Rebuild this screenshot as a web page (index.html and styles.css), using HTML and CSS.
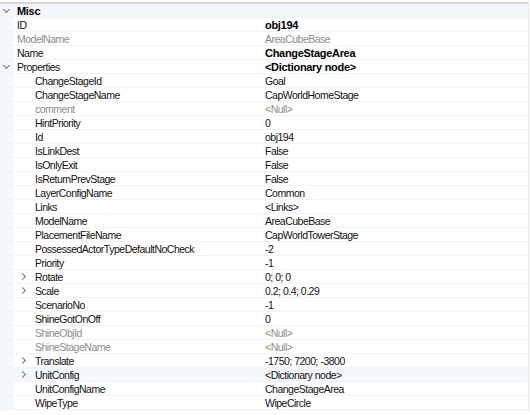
FILE: index.html
```html
<!DOCTYPE html>
<html>
<head>
<meta charset="utf-8">
<link rel="stylesheet" href="styles.css">
</head>
<body>
<div class="grid">
  <div class="row cat"><div class="m"><span class="chev down"></span></div><div class="n b">Misc</div><div class="v"></div></div>
  <div class="row"><div class="m"></div><div class="n">ID</div><div class="v b">obj194</div></div>
  <div class="row"><div class="m"></div><div class="n g">ModelName</div><div class="v g">AreaCubeBase</div></div>
  <div class="row"><div class="m"></div><div class="n">Name</div><div class="v b">ChangeStageArea</div></div>
  <div class="row"><div class="m"><span class="chev down"></span></div><div class="n">Properties</div><div class="v b">&lt;Dictionary node&gt;</div></div>
  <div class="row"><div class="m"></div><div class="n c">ChangeStageId</div><div class="v">Goal</div></div>
  <div class="row"><div class="m"></div><div class="n c">ChangeStageName</div><div class="v">CapWorldHomeStage</div></div>
  <div class="row"><div class="m"></div><div class="n c g">comment</div><div class="v g">&lt;Null&gt;</div></div>
  <div class="row"><div class="m"></div><div class="n c">HintPriority</div><div class="v">0</div></div>
  <div class="row"><div class="m"></div><div class="n c">Id</div><div class="v">obj194</div></div>
  <div class="row"><div class="m"></div><div class="n c">IsLinkDest</div><div class="v">False</div></div>
  <div class="row"><div class="m"></div><div class="n c">IsOnlyExit</div><div class="v">False</div></div>
  <div class="row"><div class="m"></div><div class="n c">IsReturnPrevStage</div><div class="v">False</div></div>
  <div class="row"><div class="m"></div><div class="n c">LayerConfigName</div><div class="v">Common</div></div>
  <div class="row"><div class="m"></div><div class="n c">Links</div><div class="v">&lt;Links&gt;</div></div>
  <div class="row"><div class="m"></div><div class="n c">ModelName</div><div class="v">AreaCubeBase</div></div>
  <div class="row"><div class="m"></div><div class="n c">PlacementFileName</div><div class="v">CapWorldTowerStage</div></div>
  <div class="row"><div class="m"></div><div class="n c">PossessedActorTypeDefaultNoCheck</div><div class="v">-2</div></div>
  <div class="row"><div class="m"></div><div class="n c">Priority</div><div class="v">-1</div></div>
  <div class="row"><div class="m"></div><div class="n c"><span class="chev right"></span>Rotate</div><div class="v">0; 0; 0</div></div>
  <div class="row"><div class="m"></div><div class="n c"><span class="chev right"></span>Scale</div><div class="v">0.2; 0.4; 0.29</div></div>
  <div class="row"><div class="m"></div><div class="n c">ScenarioNo</div><div class="v">-1</div></div>
  <div class="row"><div class="m"></div><div class="n c">ShineGotOnOff</div><div class="v">0</div></div>
  <div class="row"><div class="m"></div><div class="n c g">ShineObjId</div><div class="v g">&lt;Null&gt;</div></div>
  <div class="row"><div class="m"></div><div class="n c g">ShineStageName</div><div class="v g">&lt;Null&gt;</div></div>
  <div class="row"><div class="m"></div><div class="n c"><span class="chev right"></span>Translate</div><div class="v">-1750; 7200; -3800</div></div>
  <div class="row hl"><div class="m"></div><div class="n c"><span class="chev right"></span>UnitConfig</div><div class="v">&lt;Dictionary node&gt;</div></div>
  <div class="row"><div class="m"></div><div class="n c">UnitConfigName</div><div class="v">ChangeStageArea</div></div>
  <div class="row"><div class="m"></div><div class="n c">WipeType</div><div class="v">WipeCircle</div></div>
</div>
</body>
</html>
```
FILE: styles.css
```css
html, body {
  margin: 0;
  padding: 0;
  background: #ffffff;
}
body {
  font-family: "Liberation Sans", Arial, sans-serif;
  font-size: 10.5px;
  color: #111;
}
.grid {
  margin-top: 2px;
  border-top: 2px solid #d4d4d4;
  width: 528px;
  border-right: 1px solid #e8e8e8;
}
.row {
  display: flex;
  height: 14px;
  line-height: 14px;
  box-sizing: border-box;
  border-bottom: 1px solid #f3f3f3;
}
.row.cat {
  background: #f3f6fb;
  border-bottom: 1px solid #eef1f6;
}
.row.hl {
  background: #f3f6fb;
}
.m {
  width: 13px;
  flex: none;
  background: #f3f6fb;
  position: relative;
}
.n {
  width: 249px;
  flex: none;
  padding-left: 4px;
  box-sizing: border-box;
  white-space: nowrap;
  overflow: hidden;
  position: relative;
  letter-spacing: -0.5px;
}
.n.c {
  padding-left: 22px;
}
.v {
  flex: 1;
  padding-left: 3px;
  white-space: nowrap;
  overflow: hidden;
  letter-spacing: -0.5px;
}
.b {
  font-weight: bold;
  font-size: 11px;
  letter-spacing: -0.3px;
  color: #000;
}
.g {
  color: #8c8c8c;
}
.chev {
  position: absolute;
  width: 4px;
  height: 4px;
  border-right: 1px solid #777;
  border-bottom: 1px solid #777;
}
.chev.down {
  left: 4px;
  top: 3px;
  transform: rotate(45deg);
}
.chev.right {
  left: 7px;
  top: 4px;
  transform: rotate(-45deg);
}
```
